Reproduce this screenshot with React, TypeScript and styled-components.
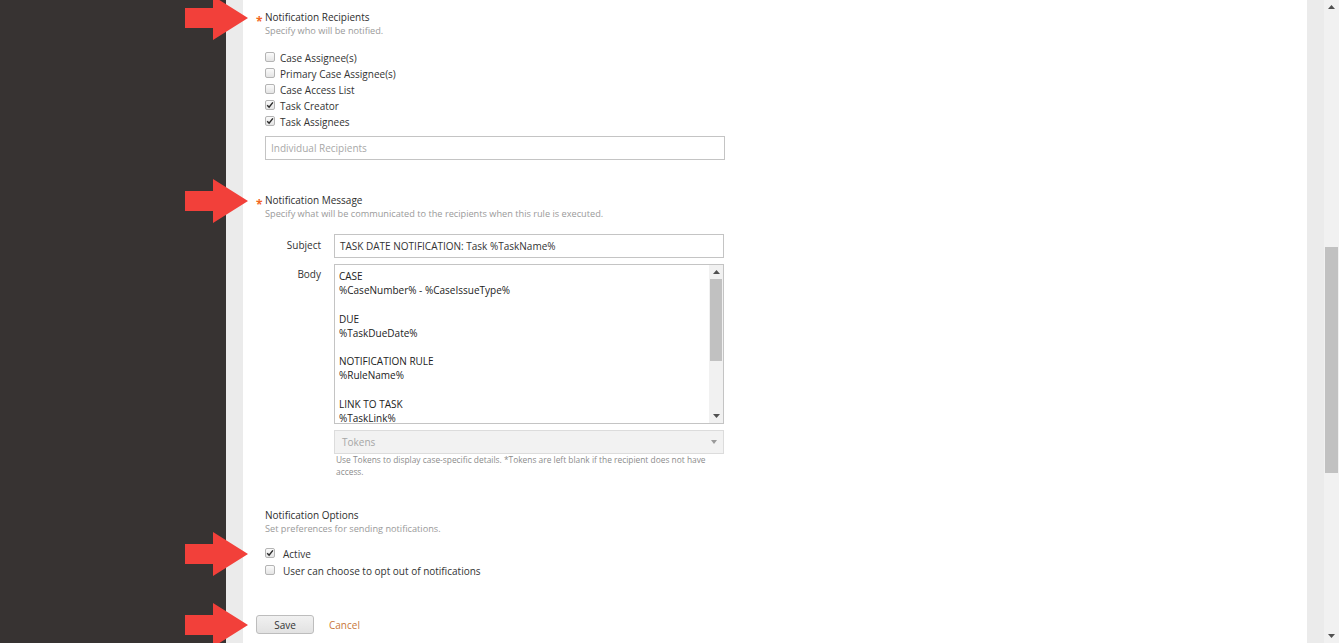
import React from "react";
import styled, { createGlobalStyle } from "styled-components";

const GlobalStyle = createGlobalStyle`
  html, body {
    margin: 0;
    padding: 0;
    overflow: hidden;
    background: #ffffff;
  }
  body {
    font-family: "Open Sans", "Liberation Sans", sans-serif;
    color: #333333;
  }
`;

const Page = styled.div`
  display: flex;
  width: 1339px;
  height: 643px;
  overflow: hidden;
`;

const Sidebar = styled.div`
  width: 226px;
  flex-shrink: 0;
  background: #373332;
`;

const Gutter = styled.div<{ $width: number }>`
  width: ${(p) => p.$width}px;
  flex-shrink: 0;
  background: #ebebeb;
`;

const Main = styled.div`
  flex: 1;
  background: #ffffff;
  padding: 11px 0 0 22px;
  display: flex;
  flex-direction: column;
`;

const Section = styled.div<{ $top: number }>`
  margin-top: ${(p) => p.$top}px;
  display: flex;
  flex-direction: column;
`;

const TitleRow = styled.div<{ $required?: boolean }>`
  position: relative;
  display: flex;
  align-items: center;
  margin-left: ${(p) => (p.$required ? -9 : 0)}px;
  height: 13px;
`;

const Asterisk = styled.span`
  width: 9px;
  height: 13px;
  font-size: 12px;
  font-weight: 700;
  line-height: 13px;
  color: #f26522;
  padding-top: 4px;
  box-sizing: border-box;
  overflow: visible;
`;

const Title = styled.div`
  font-size: 10px;
  line-height: 13px;
  color: #2e2e2e;
`;

const Subtitle = styled.div`
  font-size: 9.2px;
  line-height: 13px;
  color: #9a9a9a;
`;

const CheckList = styled.div<{ $top: number; $row: number }>`
  margin-top: ${(p) => p.$top}px;
  display: flex;
  flex-direction: column;

  & > label {
    height: ${(p) => p.$row}px;
  }
`;

const CheckRow = styled.label<{ $gap: number }>`
  position: relative;
  display: flex;
  align-items: center;
  gap: ${(p) => p.$gap}px;
  font-size: 10px;
  color: #333333;
`;

const Box = styled.span`
  width: 10px;
  height: 10px;
  box-sizing: border-box;
  border: 1px solid #b4b4b4;
  border-radius: 2px;
  background: linear-gradient(#fbfbfb, #e4e4e4);
  display: flex;
  align-items: center;
  justify-content: center;
  margin-top: -2px;
`;

const TextInput = styled.div<{ $width: number; $top?: number }>`
  width: ${(p) => p.$width}px;
  height: 24px;
  margin-top: ${(p) => p.$top ?? 0}px;
  box-sizing: border-box;
  border: 1px solid #c4c4c4;
  display: flex;
  align-items: center;
  padding-left: 5px;
  font-size: 10px;
  color: #333333;
`;

const Placeholder = styled.span`
  color: #a8a8a8;
`;

const FieldRow = styled.div<{ $top: number }>`
  display: flex;
  gap: 13px;
  margin-top: ${(p) => p.$top}px;
`;

const FieldLabel = styled.div<{ $pad: number }>`
  width: 56px;
  text-align: right;
  font-size: 10px;
  line-height: 13px;
  padding-top: ${(p) => p.$pad}px;
  color: #333333;
`;

const FieldColumn = styled.div`
  width: 390px;
  display: flex;
  flex-direction: column;
`;

const TextAreaBox = styled.div`
  height: 160px;
  box-sizing: border-box;
  border: 1px solid #c4c4c4;
  display: flex;
  overflow: hidden;
`;

const TextAreaContent = styled.div`
  flex: 1;
  padding: 4px 0 0 4px;
  font-size: 10px;
  line-height: 14.2px;
  color: #222222;
  white-space: pre;
`;

const ScrollTrack = styled.div<{ $width: number }>`
  width: ${(p) => p.$width}px;
  flex-shrink: 0;
  background: #f1f1f1;
  display: flex;
  flex-direction: column;
  align-items: center;
  justify-content: space-between;
  position: relative;
`;

const ScrollArrow = styled.div`
  height: 14px;
  display: flex;
  align-items: center;
  justify-content: center;
  color: #505050;
`;

const ScrollThumb = styled.div<{ $inset: number }>`
  position: absolute;
  left: ${(p) => p.$inset}px;
  right: ${(p) => p.$inset}px;
  background: #c1c1c1;
`;

const SelectBox = styled.div`
  height: 24px;
  margin-top: 6px;
  box-sizing: border-box;
  border: 1px solid #dcdcdc;
  background: #f2f2f2;
  display: flex;
  align-items: center;
  justify-content: space-between;
  padding: 0 6px 0 7px;
  font-size: 10px;
  color: #a6a6a6;
`;

const HelpText = styled.div`
  font-size: 8.4px;
  line-height: 12px;
  color: #8c8c8c;
  padding: 0 2px;
`;

const Actions = styled.div`
  position: relative;
  margin: 36px 0 0 -9px;
  display: flex;
  align-items: center;
  gap: 15px;
`;

const SaveButton = styled.button`
  width: 58px;
  height: 19px;
  box-sizing: border-box;
  border: 1px solid #bdbdbd;
  border-radius: 3px;
  background: linear-gradient(#f1f1f1, #e2e2e2);
  font-family: inherit;
  font-size: 10px;
  color: #333333;
  padding: 0;
`;

const CancelLink = styled.a`
  font-size: 10px;
  color: #c8763a;
  text-decoration: none;
`;

const ArrowMark = styled.svg<{ $left: number }>`
  position: absolute;
  left: ${(p) => p.$left}px;
  top: 50%;
  transform: translateY(-50%);
  width: 64px;
  height: 44px;
`;

const Arrow = ({ left }: { left: number }) => (
  <ArrowMark $left={left} viewBox="0 0 64 44">
    <path d="M0 12 H28 V0 L63 22 L28 44 V32 H0 Z" fill="#f2403a" />
  </ArrowMark>
);

const Checkbox = ({ checked }: { checked?: boolean }) => (
  <Box>
    {checked && (
      <svg width="8" height="8" viewBox="0 0 8 8">
        <path d="M1.2 4.3 L3.1 6.2 L6.9 1.4" stroke="#2b2b2b" strokeWidth="1.5" fill="none" />
      </svg>
    )}
  </Box>
);

const Scrollbar = ({
  width,
  inset,
  thumbTop,
  thumbHeight,
}: {
  width: number;
  inset: number;
  thumbTop: number;
  thumbHeight: number;
}) => (
  <ScrollTrack $width={width}>
    <ScrollArrow>
      <svg width="7" height="4" viewBox="0 0 7 4">
        <path d="M0 4 L3.5 0 L7 4 Z" fill="currentColor" />
      </svg>
    </ScrollArrow>
    <ScrollThumb $inset={inset} style={{ top: thumbTop, height: thumbHeight }} />
    <ScrollArrow>
      <svg width="7" height="4" viewBox="0 0 7 4">
        <path d="M0 0 L7 0 L3.5 4 Z" fill="currentColor" />
      </svg>
    </ScrollArrow>
  </ScrollTrack>
);

const recipients = [
  { label: "Case Assignee(s)", checked: false },
  { label: "Primary Case Assignee(s)", checked: false },
  { label: "Case Access List", checked: false },
  { label: "Task Creator", checked: true },
  { label: "Task Assignees", checked: true },
];

const bodyText = `CASE
%CaseNumber% - %CaseIssueType%

DUE
%TaskDueDate%

NOTIFICATION RULE
%RuleName%

LINK TO TASK
%TaskLink%`;

const App = () => {
  return (
    <Page>
      <GlobalStyle />
      <Sidebar />
      <Gutter $width={17} />
      <Main>
        <Section $top={0}>
          <TitleRow $required>
            <Arrow left={-71} />
            <Asterisk>*</Asterisk>
            <Title>Notification Recipients</Title>
          </TitleRow>
          <Subtitle>Specify who will be notified.</Subtitle>
          <CheckList $top={13} $row={16}>
            {recipients.map((r) => (
              <CheckRow key={r.label} $gap={5}>
                <Checkbox checked={r.checked} />
                {r.label}
              </CheckRow>
            ))}
          </CheckList>
          <TextInput $width={460} $top={6}>
            <Placeholder>Individual Recipients</Placeholder>
          </TextInput>
        </Section>

        <Section $top={34}>
          <TitleRow $required>
            <Arrow left={-71} />
            <Asterisk>*</Asterisk>
            <Title>Notification Message</Title>
          </TitleRow>
          <Subtitle>Specify what will be communicated to the recipients when this rule is executed.</Subtitle>
          <FieldRow $top={14}>
            <FieldLabel $pad={5}>Subject</FieldLabel>
            <TextInput $width={390}>TASK DATE NOTIFICATION: Task %TaskName%</TextInput>
          </FieldRow>
          <FieldRow $top={6}>
            <FieldLabel $pad={4}>Body</FieldLabel>
            <FieldColumn>
              <TextAreaBox>
                <TextAreaContent>{bodyText}</TextAreaContent>
                <Scrollbar width={14} inset={1} thumbTop={14} thumbHeight={82} />
              </TextAreaBox>
              <SelectBox>
                Tokens
                <svg width="6" height="4" viewBox="0 0 6 4">
                  <path d="M0 0 L6 0 L3 4 Z" fill="#9a9a9a" />
                </svg>
              </SelectBox>
              <HelpText>
                Use Tokens to display case-specific details. *Tokens are left blank if the recipient does not have
                access.
              </HelpText>
            </FieldColumn>
          </FieldRow>
        </Section>

        <Section $top={31}>
          <TitleRow>
            <Title>Notification Options</Title>
          </TitleRow>
          <Subtitle>Set preferences for sending notifications.</Subtitle>
          <CheckList $top={10} $row={17}>
            <CheckRow $gap={8}>
              <Arrow left={-80} />
              <Checkbox checked />
              Active
            </CheckRow>
            <CheckRow $gap={8}>
              <Checkbox />
              User can choose to opt out of notifications
            </CheckRow>
          </CheckList>
        </Section>

        <Actions>
          <Arrow left={-71} />
          <SaveButton>Save</SaveButton>
          <CancelLink href="#">Cancel</CancelLink>
        </Actions>
      </Main>
      <Gutter $width={17} />
      <Scrollbar width={15} inset={1} thumbTop={247} thumbHeight={226} />
    </Page>
  );
};

export default App;
